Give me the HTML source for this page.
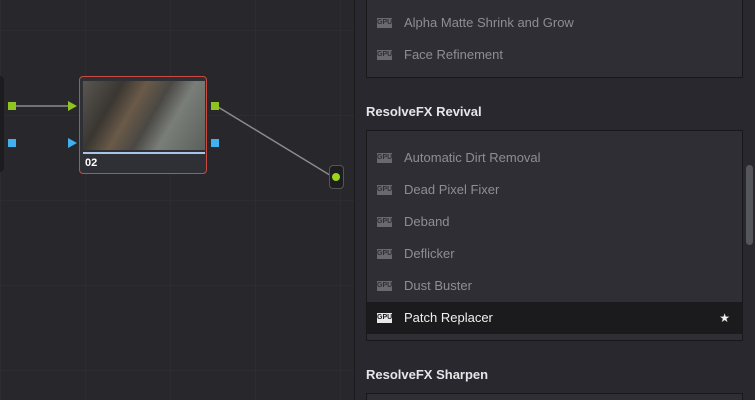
<!DOCTYPE html>
<html><head><style>
html,body{margin:0;width:755px;height:400px;overflow:hidden}
body{background:#28282c;font-family:"Liberation Sans",sans-serif;position:relative}
.ne{position:absolute;left:0;top:0;width:354px;height:400px;background-color:#28282c;
background-image:linear-gradient(#2d2d31 1px,transparent 1px),linear-gradient(90deg,#2d2d31 1px,transparent 1px);background-size:85px 85px;background-position:0 30px}
.panel{position:absolute;left:354px;top:0;width:401px;height:400px;background:#28282e;border-left:1px solid #1a1a1d;box-sizing:border-box}
.box{position:absolute;left:11px;width:377px;background:#2e2e34;border:1px solid #18181b;box-sizing:border-box}
.it{position:absolute;left:0;width:100%;height:32px;line-height:32px;color:#8e8e92;font-size:13px}
.it .g{position:absolute;left:10px;top:11px;width:15px;height:10px;background:#6a6a6e;color:#2e2e34;font-size:7px;line-height:10px;text-align:center;font-weight:bold}
.it span.t{position:absolute;left:37px}
.h{position:absolute;left:11px;color:#e6e6e8;font-weight:bold;font-size:13px}
.sq{position:absolute;width:8px;height:8px}
</style></head><body>
<div class="ne">
<div style="position:absolute;left:-6px;top:76px;width:10px;height:96px;background:#1c1c1f;border-radius:4px"></div>
<svg width="354" height="400" style="position:absolute;left:0;top:0">
<line x1="15" y1="106" x2="70" y2="106" stroke="#8a8a8a" stroke-width="1.5"/>
<line x1="218" y1="107" x2="333" y2="177" stroke="#8a8a8a" stroke-width="1.5"/>
<polygon points="68,101 77,106 68,111" fill="#8fc31f"/>
<polygon points="68,138 77,143 68,148" fill="#3fb1f0"/>
</svg>
<div class="sq" style="left:8px;top:102px;background:#8fc31f"></div>
<div class="sq" style="left:8px;top:139px;background:#3fb1f0"></div>
<div class="sq" style="left:211px;top:102px;background:#8fc31f"></div>
<div class="sq" style="left:211px;top:139px;background:#3fb1f0"></div>
<div style="position:absolute;left:79px;top:76px;width:126px;height:96px;border:1px solid #c84a40;border-radius:4px;background:#2f3035">
<div style="position:absolute;left:3px;top:4px;width:122px;height:69px;background:linear-gradient(120deg,#5a5650 0%,#3a3632 25%,#6a5a48 40%,#4a4844 55%,#7a7e78 70%,#5c605a 100%)"></div>
<div style="position:absolute;left:3px;top:75px;width:122px;height:2px;background:#a8c4e6"></div>
<div style="position:absolute;left:5px;top:80px;color:#fff;font-weight:bold;font-size:11px">02</div>
</div>
<div style="position:absolute;left:329px;top:165px;width:13px;height:22px;border:1px solid #555;border-radius:4px;background:#1e1e21"></div>
<div style="position:absolute;left:332px;top:173px;width:8px;height:8px;border-radius:50%;background:#9cd41c"></div>
</div>
<div class="panel">
<div class="box" style="top:-2px;height:80px">
<div class="it" style="top:8px"><div class="g">GPU</div><span class="t">Alpha Matte Shrink and Grow</span></div>
<div class="it" style="top:40px"><div class="g">GPU</div><span class="t">Face Refinement</span></div>
</div>
<div class="h" style="top:104px">ResolveFX Revival</div>
<div class="box" style="top:130px;height:211px">
<div class="it" style="top:11px"><div class="g">GPU</div><span class="t">Automatic Dirt Removal</span></div>
<div class="it" style="top:43px"><div class="g">GPU</div><span class="t">Dead Pixel Fixer</span></div>
<div class="it" style="top:75px"><div class="g">GPU</div><span class="t">Deband</span></div>
<div class="it" style="top:107px"><div class="g">GPU</div><span class="t">Deflicker</span></div>
<div class="it" style="top:139px"><div class="g">GPU</div><span class="t">Dust Buster</span></div>
<div class="it" style="top:171px;background:#1b1b1e;color:#f0f0f0"><div class="g" style="background:#e8e8e8;color:#1b1b1e">GPU</div><span class="t">Patch Replacer</span><span style="position:absolute;right:12px;font-size:12px">★</span></div>
</div>
<div style="position:absolute;left:391px;top:165px;width:7px;height:80px;border-radius:4px;background:#55565a"></div>
<div class="h" style="top:367px">ResolveFX Sharpen</div>
<div class="box" style="top:393px;height:20px"></div>
</div>
</body></html>
